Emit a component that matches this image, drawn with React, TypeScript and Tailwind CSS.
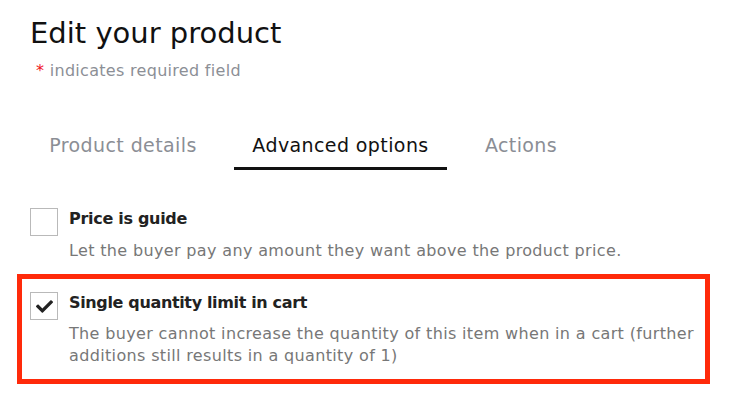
import React from "react";
import { FaCheck } from "react-icons/fa";

export default function App() {
  return (
    <div className="w-[746px] h-[401px] bg-white overflow-hidden font-['DejaVu_Sans',sans-serif]">
      <div className="pl-[30px]">
        <h1 className="mt-[15px] text-[29px] leading-[36px] text-[#111] font-normal">Edit your product</h1>
        <p className="mt-[9px] ml-[6px] text-[16px] leading-[22px] tracking-[0.3px] text-[#8c8f96]">
          <span className="text-[#f0141e]">*</span> indicates required field
        </p>
        <div className="mt-[51px] flex gap-[18px] text-[19px] leading-[24px] tracking-[0.4px]">
          <div className="w-[186px] text-center pb-[10px] text-[#8b8e95] border-b-[3px] border-transparent">Product details</div>
          <div className="w-[213px] text-center pb-[10px] text-[#111] border-b-[3px] border-[#111]">Advanced options</div>
          <div className="w-[112px] text-center pb-[10px] text-[#8b8e95] border-b-[3px] border-transparent">Actions</div>
        </div>
        <div className="mt-[37px] flex gap-[11px]">
          <div className="mt-[1px] w-[28px] h-[28px] border border-[#b9b9b9] bg-white shrink-0" />
          <div>
            <div className="text-[16px] leading-[24px] font-bold tracking-[-0.3px] text-[#222]">Price is guide</div>
            <div className="mt-[9px] text-[16px] leading-[22px] tracking-[0.35px] text-[#777]">Let the buyer pay any amount they want above the product price.</div>
          </div>
        </div>
        <div className="mt-[12px] ml-[-13px] w-[693px] border-[5px] border-[#ff2a0a] pl-[8px] pt-[12px] pb-[12px] flex gap-[11px]">
          <div className="mt-[1px] w-[28px] h-[28px] border border-[#b9b9b9] bg-white shrink-0 flex items-center justify-center">
            <FaCheck className="w-[17px] h-[17px] text-[#222]" />
          </div>
          <div>
            <div className="text-[16px] leading-[24px] font-bold tracking-[-0.35px] text-[#222]">Single quantity limit in cart</div>
            <div className="mt-[8px] text-[16px] leading-[22px] tracking-[0.35px] text-[#777] whitespace-nowrap">
              The buyer cannot increase the quantity of this item when in a cart (further
              <br />
              additions still results in a quantity of 1)
            </div>
          </div>
        </div>
      </div>
    </div>
  );
}
